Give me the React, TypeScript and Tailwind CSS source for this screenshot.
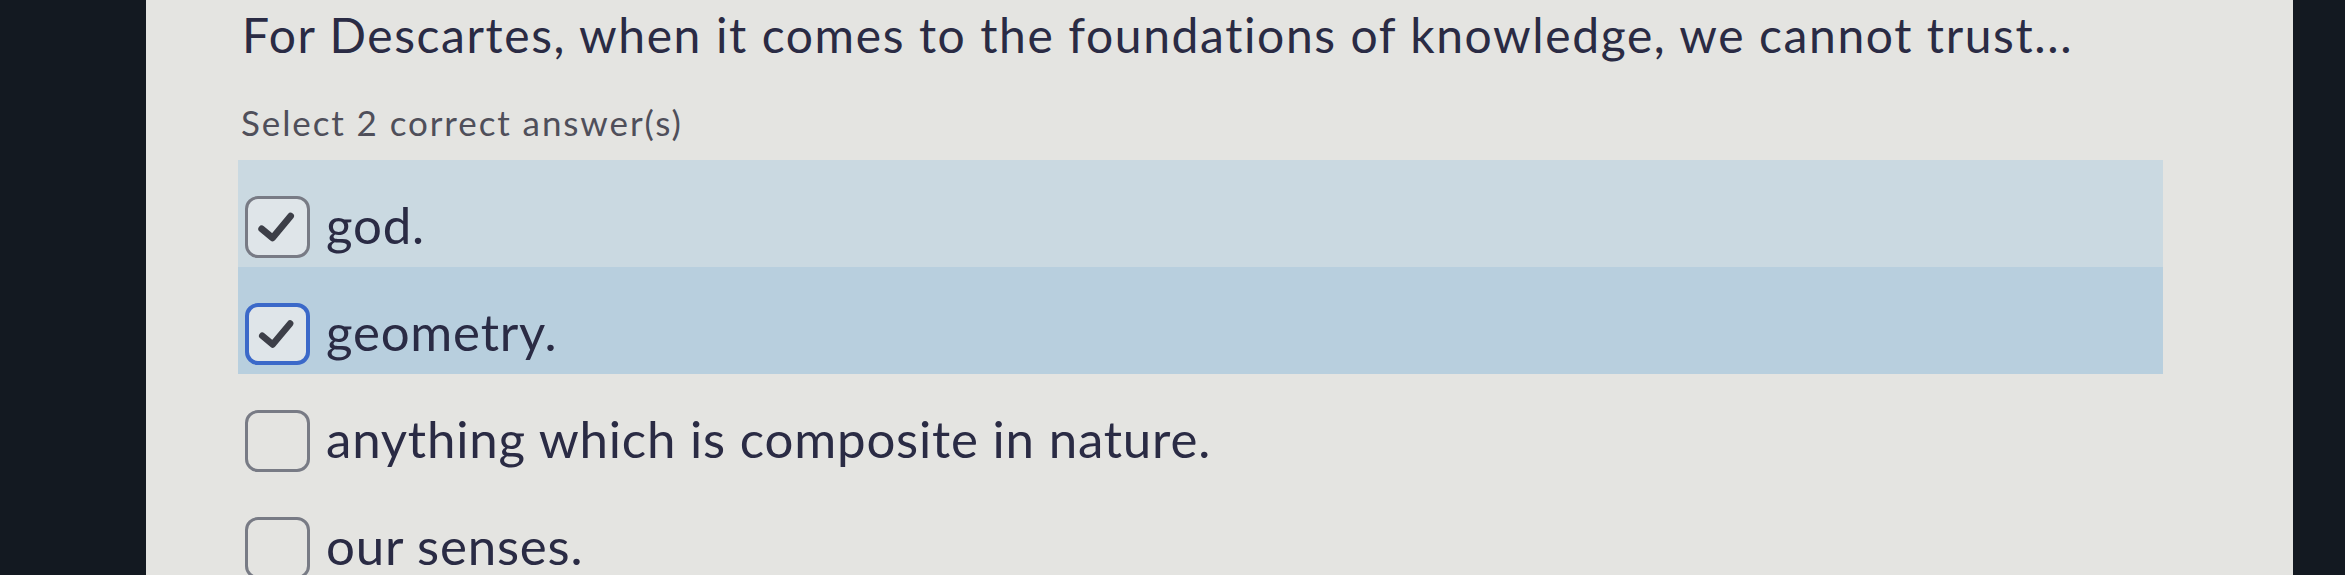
import React from "react";

type Opt = { label: string; checked: boolean; bg: string; focus: boolean };

const options: Opt[] = [
  { label: "god.", checked: true, bg: "bg-[#cad9e1]", focus: false },
  { label: "geometry.", checked: true, bg: "bg-[#b8cfde]", focus: true },
  { label: "anything which is composite in nature.", checked: false, bg: "", focus: false },
  { label: "our senses.", checked: false, bg: "", focus: false },
];

function Check() {
  return (
    <svg viewBox="0 0 65 62" className="w-full h-full">
      <path
        d="M15 33 L27 43 L47 19"
        fill="none"
        stroke="#3d3f48"
        strokeWidth="7.5"
        strokeLinecap="round"
        strokeLinejoin="round"
      />
    </svg>
  );
}

export default function App() {
  return (
    <div className="flex h-[575px] w-[2345px] overflow-hidden" style={{ fontFamily: "Lato, 'Noto Sans', sans-serif" }}>
      <div className="w-[146px] shrink-0 bg-[#131921]" />
      <div className="flex-1 bg-[#e4e4e1] pl-[92px] pt-[6px]">
        <h1 className="pl-[4px] text-[48px] leading-[1.2] font-normal text-[#2a2b44] tracking-[1.6px]">
          For Descartes, when it comes to the foundations of knowledge, we cannot trust...
        </h1>
        <p className="mt-[37px] pl-[3px] text-[35px] leading-[1.2] text-[#4f4f5a] tracking-[1.9px]">
          Select 2 correct answer(s)
        </p>
        <div className="mt-[17px] w-[1925px] flex flex-col">
          {options.map((o) => (
            <div key={o.label} className={`h-[107px] flex items-start pt-[36px] pl-[7px] ${o.bg}`}>
              <div className="flex items-center gap-[16px]">
                <div
                  className={`w-[65px] h-[62px] shrink-0 rounded-[13px] ${o.checked ? "bg-[#dfe5e9]" : "bg-transparent"} ${
                    o.focus ? "border-[4px] border-[#3b69c9]" : "border-[3px] border-[#787b85]"
                  }`}
                >
                  {o.checked && <Check />}
                </div>
                <span className="text-[51px] leading-none text-[#2a2b44] tracking-[0.8px] -mt-[4px]">{o.label}</span>
              </div>
            </div>
          ))}
        </div>
      </div>
      <div className="w-[52px] shrink-0 bg-[#131921]" />
    </div>
  );
}
